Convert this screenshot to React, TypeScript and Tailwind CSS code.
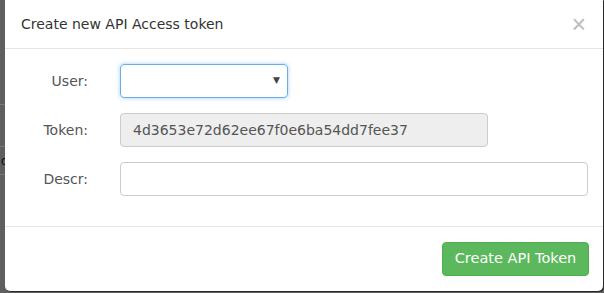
import React from "react";

export default function App() {
  const font = { fontFamily: '"DejaVu Sans", Verdana, sans-serif' };
  return (
    <div className="w-[604px] h-[293px] bg-[#5f5f5f] flex overflow-hidden" style={font}>
      <div className="w-[5px] flex flex-col shrink-0 overflow-hidden">
        <div className="h-[104px]" />
        <div className="h-px bg-[#7a7a7a]" />
        <div className="h-[41px]" />
        <div className="h-px bg-[#7a7a7a]" />
        <div className="h-[7px]" />
        <div className="h-[14px] flex justify-end text-[13px] leading-[14px] text-[#111]">
          <span className="-mr-[4px]">d</span>
        </div>
        <div className="h-[6px]" />
        <div className="h-px bg-[#7a7a7a]" />
      </div>
      <div className="w-[598px] h-[291px] bg-white rounded-b-[5px] flex flex-col shrink-0 shadow-[1px_1px_0_#2a2a2a]">
        <div className="h-[49px] border-b border-[#e5e5e5] flex items-center justify-between pl-[16px] pr-[17px]">
          <span className="text-[14px] text-[#333]">Create new API Access token</span>
          <span className="text-[25px] leading-none text-[#bdbdbd]" style={{ fontFamily: '"Liberation Sans", Arial, sans-serif' }}>×</span>
        </div>
        <div className="flex flex-col gap-[15px] pt-[15px] pl-[15px] pr-[15px] pb-[30px] text-[14px] text-[#555]">
          <div className="flex items-center">
            <label className="w-[68px] text-right">User:</label>
            <div className="ml-[32px] w-[168px] h-[34px] rounded-[4px] border border-[#66afe9] shadow-[0_0_4px_rgba(102,175,233,0.6)] flex items-center justify-end pr-[7px]">
              <span className="text-[9px] text-[#444]">▼</span>
            </div>
          </div>
          <div className="flex items-center">
            <label className="w-[68px] text-right">Token:</label>
            <div className="ml-[32px] w-[368px] h-[34px] rounded-[4px] border border-[#ccc] bg-[#eeeeee] flex items-center px-[12px]">
              4d3653e72d62ee67f0e6ba54dd7fee37
            </div>
          </div>
          <div className="flex items-center">
            <label className="w-[68px] text-right">Descr:</label>
            <div className="ml-[32px] w-[468px] h-[34px] rounded-[4px] border border-[#ccc] bg-white" />
          </div>
        </div>
        <div className="border-t border-[#e5e5e5] flex justify-end pt-[15px] pr-[14px]">
          <button className="w-[147px] h-[34px] rounded-[4px] bg-[#5cb85c] border border-[#4cae4c] text-white text-[14.5px] flex items-center justify-center">
            Create API Token
          </button>
        </div>
      </div>
    </div>
  );
}
